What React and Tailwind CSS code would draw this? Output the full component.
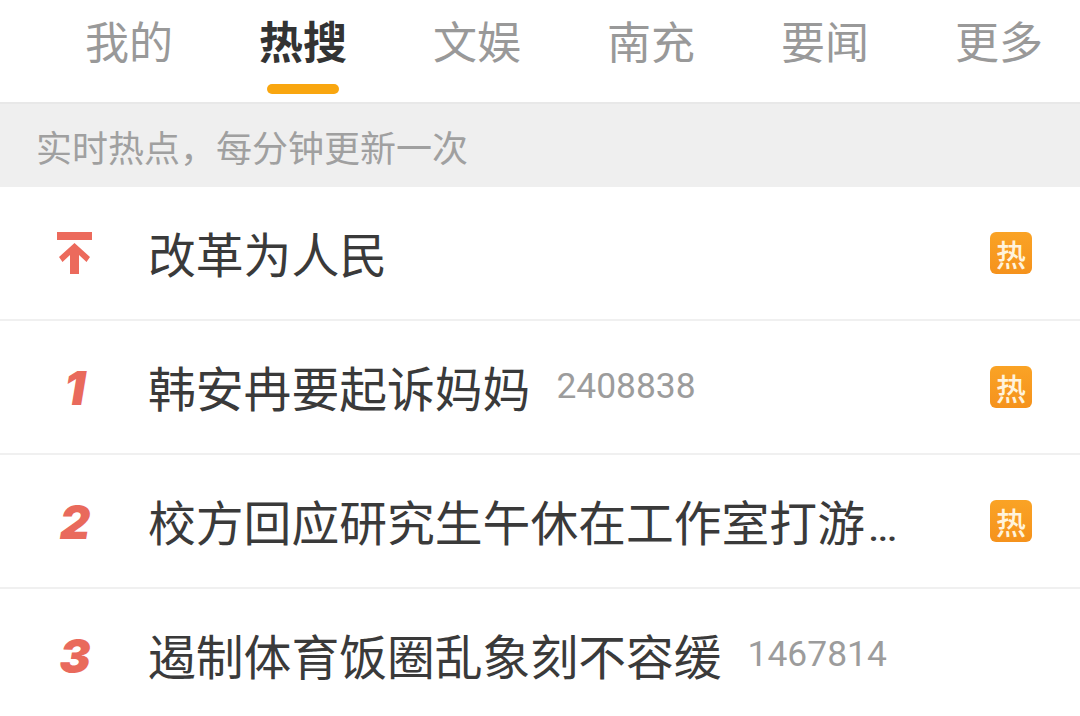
import React from "react";

const CJK = "font-['Noto_Sans_CJK_SC','Noto_Sans',sans-serif]";

const tabs = ["我的", "热搜", "文娱", "南充", "要闻", "更多"];

const rows = [
  { rank: "top", title: "改革为人民", hot: true },
  { rank: "1", title: "韩安冉要起诉妈妈", count: "2408838", hot: true },
  { rank: "2", title: "校方回应研究生午休在工作室打游", more: true, hot: true },
  { rank: "3", title: "遏制体育饭圈乱象刻不容缓", count: "1467814" },
];

function TopIcon() {
  return (
    <svg width="36" height="42" viewBox="0 0 36 42" fill="#ec6a5c">
      <rect x="0" y="0" width="35" height="8" />
      <path d="M17.5 11 L33 25 L29.5 30 L22 23 L22 42 L13 42 L13 23 L5.5 30 L2 25 Z" />
    </svg>
  );
}

function HotBadge() {
  return (
    <div className="flex h-[42px] w-[42px] items-center justify-center rounded-[6px] bg-gradient-to-b from-[#faa325] to-[#f5921c] text-[30px] leading-none font-medium text-[#fff3dc]">
      热
    </div>
  );
}

function Row({ rank, title, count, hot, more }) {
  return (
    <div className="flex h-[134px] items-center border-b-2 border-[#f0f0f0] pr-[48px]">
      <div className="flex w-[148px] shrink-0 justify-center pl-[2px]">
        {rank === "top" ? (
          <TopIcon />
        ) : (
          <span className="font-['Inter',sans-serif] text-[47px] leading-none font-black text-[#e96a5c] italic">
            {rank}
          </span>
        )}
      </div>
      <div className="flex min-w-0 flex-1 items-center">
        <span className="text-[47.8px] leading-none whitespace-nowrap text-[#3a3a3a]">
          {title}
          {more && <span className="ml-[4px] font-['Roboto',sans-serif] text-[32px] font-bold">...</span>}
        </span>
        {count && (
          <span className="ml-[26px] font-['Roboto',sans-serif] text-[35.4px] leading-none text-[#9c9c9c]">
            {count}
          </span>
        )}
      </div>
      {hot && <HotBadge />}
    </div>
  );
}

export default function App() {
  return (
    <div className={`h-[716px] w-[1080px] overflow-hidden bg-white ${CJK}`}>
      {/* tab bar */}
      <div className="grid h-[104px] grid-cols-[repeat(6,174px)] border-b-2 border-[#e8e8e8] pl-[42px]">
        {tabs.map((t) => (
          <div key={t} className="relative flex justify-center pt-[13px]">
            <span
              className={
                t === "热搜"
                  ? "text-[44px] leading-[54px] font-bold text-[#333333]"
                  : "text-[44px] leading-[54px] text-[#999999]"
              }
            >
              {t}
            </span>
            {t === "热搜" && (
              <div className="absolute bottom-[8px] h-[10px] w-[72px] rounded-full bg-[#f9a60f]" />
            )}
          </div>
        ))}
      </div>

      <div className="flex h-[83px] items-center bg-[#efefef] pl-[36px] text-[36px] leading-none text-[#a0a0a0]">
        实时热点，每分钟更新一次
      </div>

      {rows.map((r) => (
        <Row key={r.rank} {...r} />
      ))}
    </div>
  );
}
